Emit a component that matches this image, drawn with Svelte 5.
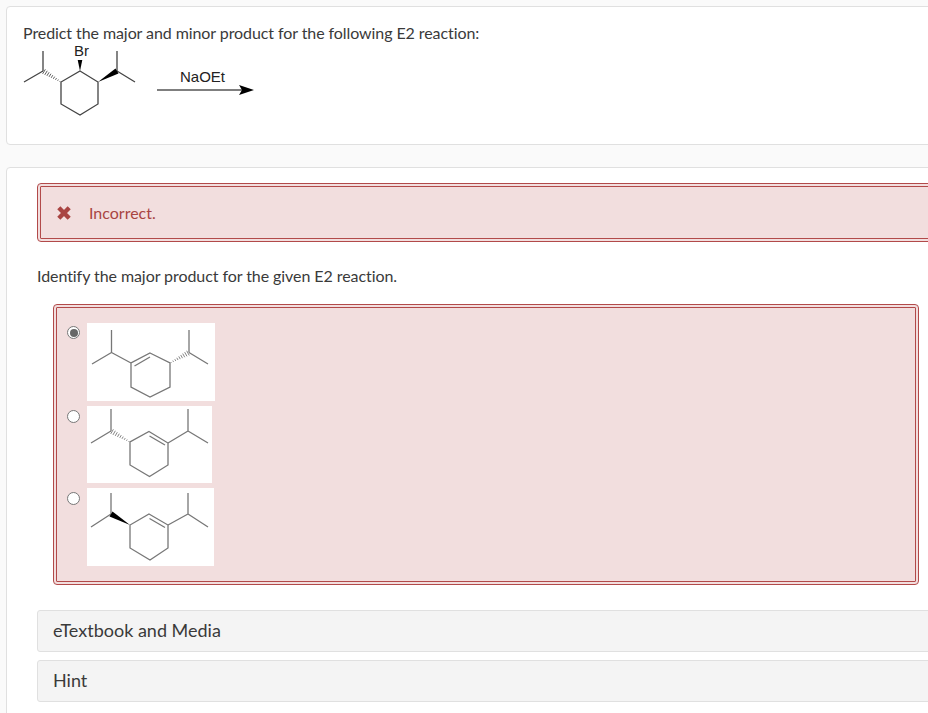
<script>
  const options = [
    {
      w: 128, h: 78, x: 87, y: 323, selected: true,
      hex: '150,353 170,363 170,387 150,397 131,387 131,363',
      dbl: 'M134.500 366 L150 357',
      bonds: 'M131 363 L111.500 352.500 M111.500 352.500 L111.500 330 M111.500 352.500 L92 364 M189 352.500 L189 330 M189 352.500 L208 364',
      hash: [170, 363, 189, 352.5], wedge: null
    },
    {
      w: 125, h: 77, x: 87, y: 406, selected: false,
      hex: '149,431.500 168,443 168,465 149.500,476.500 130,465 130,442',
      dbl: 'M149.500 436 L165 445',
      bonds: 'M111 431 L111 409 M111 431 L91 443 M168 443 L188 431 M188 431 L188 409 M188 431 L208 443',
      hash: [130, 442, 111, 431], wedge: null
    },
    {
      w: 127, h: 78, x: 87, y: 488, selected: false,
      hex: '149,514 168,525 168,548 150,560 130,548 130,525',
      dbl: 'M149.500 518.500 L165 527.500',
      bonds: 'M111 514 L111 493 M111 514 L91 527 M168 525 L188 514 M188 514 L188 493 M188 514 L208 527',
      hash: null, wedge: '130,525 112.500,511.500 109.500,516.500'
    }
  ];

  function hashLines(a) {
    const [x1, y1, x2, y2] = a;
    const n = 9;
    const dx = x2 - x1, dy = y2 - y1;
    const len = Math.hypot(dx, dy);
    const px = -dy / len, py = dx / len;
    let d = '';
    for (let i = 0; i < n; i++) {
      const t = (i + 0.5) / n;
      const hw = 0.3 + t * 2.5;
      const cx = x1 + dx * t, cy = y1 + dy * t;
      d += `M${(cx + px * hw).toFixed(2)} ${(cy + py * hw).toFixed(2)} L${(cx - px * hw).toFixed(2)} ${(cy - py * hw).toFixed(2)} `;
    }
    return d;
  }
</script>

<div class="page">
  <section class="card question">
    <p class="prompt">Predict the major and minor product for the following E2 reaction:</p>
    <svg class="scheme" width="260" height="80" viewBox="0 40 260 80" aria-label="Reaction scheme">
      <polygon class="ring" points="80,71 98,82 98,104 80,115 61,104 61,82" />
      <path class="ring" d="M43 71 L43 51 M43 71 L24 82 M117 71 L117 51 M117 71 L135 82" />
      <path class="hash" d={hashLines([61, 82, 43, 71])} />
      <polygon class="solid" points="80,71 77.700,60 82.300,60" />
      <polygon class="solid" points="98,82 115.500,68.500 118.500,73.500" />
      <text class="atom" x="81.500" y="56">Br</text>
      <text class="atom" x="202.500" y="82">NaOEt</text>
      <line class="arrow" x1="157" y1="90" x2="242" y2="90" />
      <polygon class="solid" points="239,85 254,90 239,95 242,90" />
    </svg>
  </section>

  <section class="card answer">
    <div class="alert">
      <svg class="cross" width="16" height="16" viewBox="0 0 16 16" aria-hidden="true">
        <path d="M2.800 2.800 L13.200 13.200 M13.200 2.800 L2.800 13.200" />
      </svg>
      <span>Incorrect.</span>
    </div>

    <p class="feedback">Identify the major product for the given E2 reaction.</p>

    <div class="options">
      {#each options as o}
        <div class="option">
          <span class="radio" class:selected={o.selected}></span>
          <svg class="mol" width={o.w} height={o.h} viewBox="{o.x} {o.y} {o.w} {o.h}" aria-hidden="true">
            <polygon class="bond" points={o.hex} />
            <path class="bond" d={o.dbl} />
            <path class="bond" d={o.bonds} />
            {#if o.hash}<path class="hashg" d={hashLines(o.hash)} />{/if}
            {#if o.wedge}<polygon class="solid" points={o.wedge} />{/if}
          </svg>
        </div>
      {/each}
    </div>

    <div class="panel first">eTextbook and Media</div>
    <div class="panel">Hint</div>
  </section>
</div>

<style>
  :global(html), :global(body) {
    margin: 0;
    height: 713px;
    overflow: hidden;
    background: #fafafa;
  }
  .page {
    width: 1100px;
    padding: 6px 0 0 6px;
    font-family: Lato, "Noto Sans", sans-serif;
    color: #3a3a3a;
  }
  .card {
    background: #fff;
    border: 1px solid #e0e0e0;
    border-radius: 4px;
    box-sizing: border-box;
  }
  .question {
    height: 139px;
    padding: 16px 16px 0;
    margin-bottom: 22px;
    position: relative;
  }
  .prompt {
    margin: 0;
    font-size: 16px;
    line-height: 20px;
    letter-spacing: -0.08px;
  }
  .scheme {
    position: absolute;
    left: -7px;
    top: 33px;
  }
  .ring, .bond {
    fill: none;
    stroke-width: 1.3;
  }
  .ring { stroke: #444; }
  .bond { stroke: #777; }
  .hash { fill: none; stroke: #333; stroke-width: 0.8; }
  .hashg { fill: none; stroke: #666; stroke-width: 0.8; }
  .solid { fill: #000; }
  .atom {
    font-family: "Liberation Sans", Arial, sans-serif;
    font-size: 15px;
    text-anchor: middle;
    fill: #222;
  }
  .arrow { stroke: #000; stroke-width: 1.2; }

  .answer {
    padding: 15px 0 0 30px;
    height: 600px;
  }
  .alert {
    display: flex;
    align-items: center;
    box-sizing: border-box;
    height: 59px;
    border: 4px double #b24a4a;
    border-radius: 4px;
    background: #f2dede;
    color: #a94442;
    font-size: 16px;
    padding-left: 15px;
  }
  .cross { margin-right: 17px; }
  .cross path {
    fill: none;
    stroke: #a94442;
    stroke-width: 4.4;
  }
  .feedback {
    margin: 24px 0 18px;
    font-size: 16px;
    line-height: 20px;
    letter-spacing: -0.07px;
  }
  .options {
    box-sizing: border-box;
    width: 866px;
    height: 281px;
    margin-left: 16px;
    padding: 15px 0 0 10px;
    border: 4px double #b24a4a;
    border-radius: 4px;
    background: #f2dede;
    display: flex;
    flex-direction: column;
    gap: 5px;
  }
  .option {
    display: flex;
    align-items: flex-start;
    gap: 7px;
  }
  .mol { background: #fff; display: block; }
  .radio {
    box-sizing: border-box;
    width: 13px;
    height: 13px;
    margin-top: 4px;
    border-radius: 50%;
    border: 1px solid #777;
    background: #fff;
    position: relative;
    flex: none;
  }
  .radio.selected { margin-top: 3px; }
  .radio.selected::after {
    content: "";
    position: absolute;
    inset: 1.5px;
    border-radius: 50%;
    background: #666;
  }
  .panel {
    box-sizing: border-box;
    height: 42px;
    line-height: 39px;
    padding-left: 15px;
    margin-top: 8px;
    background: #f4f4f4;
    border: 1px solid #e0e0e0;
    border-radius: 3px;
    font-size: 18px;
  }
  .panel.first { margin-top: 25px; }
</style>
